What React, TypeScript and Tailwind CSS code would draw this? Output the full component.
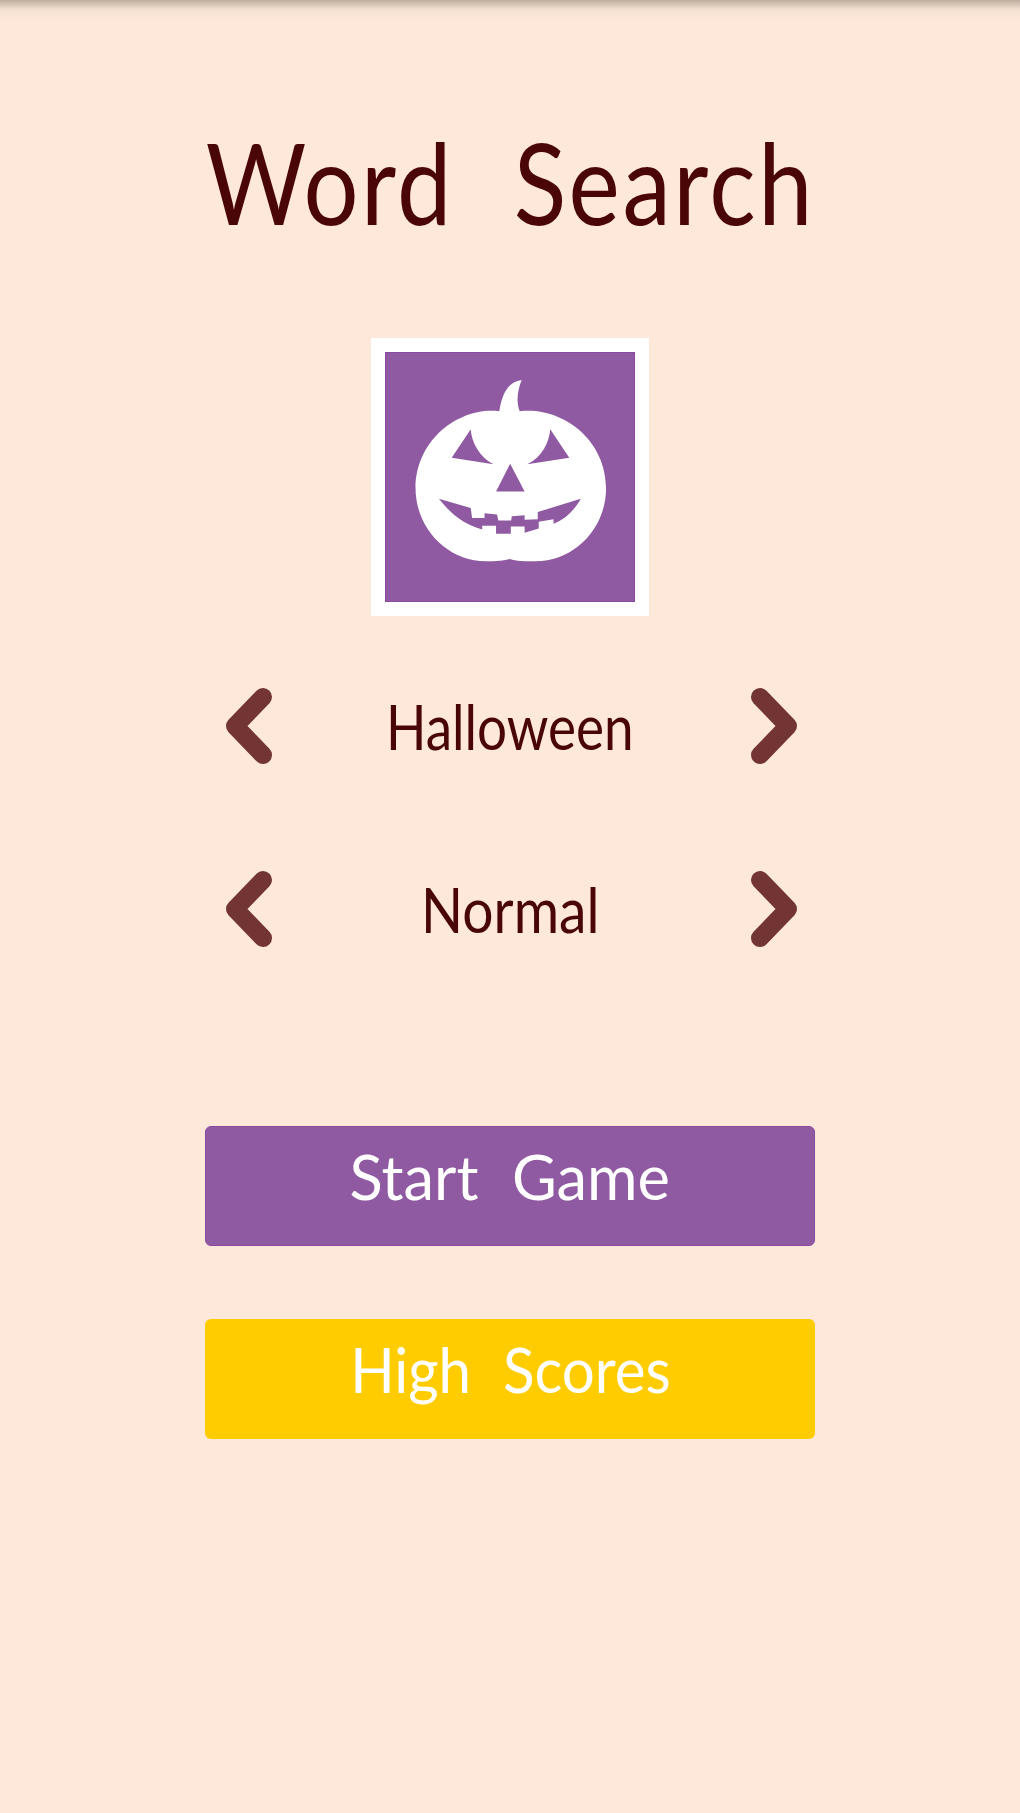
const font = "font-['Lato',sans-serif] font-normal";

function Chevron({ right = false }: { right?: boolean }) {
  return (
    <svg
      width="49"
      height="76"
      viewBox="0 0 49 76"
      fill="none"
      className={right ? "translate-x-[3px]" : ""}
    >
      <path
        d={right ? "M11 9 L39 38 L11 67" : "M38 9 L10 38 L38 67"}
        stroke="#733533"
        strokeWidth="18"
        strokeLinecap="round"
        strokeLinejoin="round"
      />
    </svg>
  );
}

function Picker({ label, className, textClass }: { label: string; className: string; textClass: string }) {
  return (
    <div className={`w-full grid grid-cols-[49px_1fr_49px] items-center px-5 h-[76px] ${className}`}>
      <Chevron />
      <span className={`${font} ${textClass} justify-self-center inline-block text-[62px] leading-none text-[#4a0507]`}>
        {label}
      </span>
      <Chevron right />
    </div>
  );
}

function MenuButton({ label, className, textClass }: { label: string; className: string; textClass: string }) {
  return (
    <button className={`w-full h-[120px] rounded-md pb-[20px] flex items-center justify-center text-white ${className}`}>
      <span className={`${font} ${textClass} inline-block text-[62px] leading-none [word-spacing:18px]`}>
        {label}
      </span>
    </button>
  );
}

export default function App() {
  return (
    <div className="relative min-h-[1813px] w-full bg-[#fee8d9] overflow-hidden">
      <div className="absolute inset-x-0 top-0 h-5 bg-gradient-to-b from-[#bfae9f] via-[#f5e2d3] to-[#fee8d9]" />
      <div className="mx-auto w-[610px] flex flex-col items-center">
        <h1 className={`mt-[132px] h-[100px] flex items-center text-[112px] leading-none tracking-[3px] [word-spacing:37px] scale-x-[0.867] text-[#4a0507] whitespace-pre ${font}`}>
          Word Search
        </h1>
        <div className="mt-[106px] w-[278px] h-[278px] bg-white p-[14px]">
          <div className="w-full h-full bg-[#905aa3] border border-[#8a4aa0]">
            <svg viewBox="75 78 755 755" className="w-full h-full">
              <path
                fill="#ffffff"
                fillRule="evenodd"
                d="M420 255 C428 205 445 165 488 160 C476 190 470 225 482 255 C610 240 745 340 745 490 C745 610 650 712 530 712 C500 712 470 712 452 705 C435 710 410 712 380 712 C260 712 165 610 165 490 C165 340 300 240 420 255 Z
                M333 310 C335 350 360 395 402 417 L275 397 Z
                M575 310 C572 350 550 395 505 417 L633 397 Z
                M453 415 L497 500 L410 500 Z
                M236 522 L333 550 L337 580 L375 580 L375 566 L413 570 L417 588 L456 588 L458 575 L497 572 L497 586 L537 584 L537 562 L668 522 C650 555 620 585 585 598 L585 584 L540 592 L540 612 L497 625 L497 606 L455 606 L455 628 L410 628 L410 604 L368 604 L368 615 C310 600 270 565 236 522 Z"
              />
            </svg>
          </div>
        </div>
        <Picker label="Halloween" className="mt-[72px]" textClass="scale-x-[0.855]" />
        <Picker label="Normal" className="mt-[107px]" textClass="scale-x-[0.89]" />
        <MenuButton label="Start Game" className="mt-[179px] bg-[#905aa3] border border-[#8a4aa0]" textClass="scale-x-[0.99]" />
        <MenuButton label="High Scores" className="mt-[73px] bg-[#ffcc00]" textClass="scale-x-[0.94]" />
      </div>
    </div>
  );
}
